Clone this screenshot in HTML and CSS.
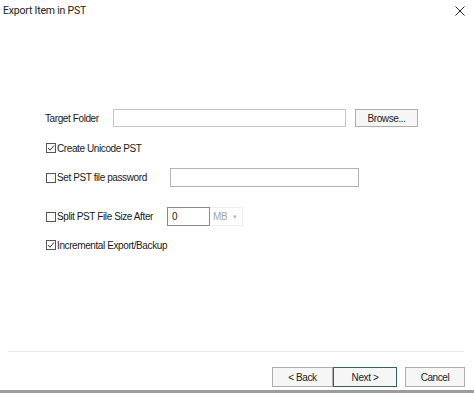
FILE: index.html
```html
<!DOCTYPE html>
<html>
<head>
<meta charset="utf-8">
<link rel="stylesheet" href="styles.css">
</head>
<body>
<div class="window">
  <header class="titlebar">
    <span class="title">Export Item in PST</span>
    <svg class="close" width="10" height="10" viewBox="0 0 10 10"><path d="M0.5 0.5 L9.5 9.5 M9.5 0.5 L0.5 9.5" stroke="#222" stroke-width="1" fill="none"/></svg>
  </header>
  <main class="content">
    <div class="row row-target">
      <span class="label label-target">Target Folder</span>
      <span class="input input-target"></span>
      <span class="btn btn-browse">Browse...</span>
    </div>
    <div class="row row-unicode">
      <span class="check checked"><svg width="8" height="8" viewBox="0 0 8 8"><path d="M1 4 L3 6.2 L7 1.5" stroke="#333" stroke-width="1" fill="none"/></svg></span>
      <span class="label">Create Unicode PST</span>
    </div>
    <div class="row row-password">
      <span class="check"></span>
      <span class="label label-password">Set PST file password</span>
      <span class="input input-password"></span>
    </div>
    <div class="row row-split">
      <span class="check"></span>
      <span class="label label-split">Split PST File Size After</span>
      <span class="input input-split">0</span>
      <span class="combo"><span class="combo-text">MB</span><span class="combo-arrow">&#9662;</span></span>
    </div>
    <div class="row row-incremental">
      <span class="check checked"><svg width="8" height="8" viewBox="0 0 8 8"><path d="M1 4 L3 6.2 L7 1.5" stroke="#333" stroke-width="1" fill="none"/></svg></span>
      <span class="label">Incremental Export/Backup</span>
    </div>
  </main>
  <footer class="footer">
    <div class="separator"></div>
    <div class="buttons">
      <span class="btn btn-back">&lt; Back</span>
      <span class="btn btn-next">Next &gt;</span>
      <span class="btn btn-cancel">Cancel</span>
    </div>
  </footer>
  <div class="strip"></div>
</div>
</body>
</html>
```

FILE: styles.css
```css
html, body {
  margin: 0;
  padding: 0;
  background: #ffffff;
}

.window {
  width: 474px;
  height: 393px;
  display: flex;
  flex-direction: column;
  background: #ffffff;
  font-family: "Liberation Sans", Arial, sans-serif;
  font-size: 10px;
  letter-spacing: -0.4px;
  color: #1a1a1a;
  overflow: hidden;
}

.titlebar {
  height: 21px;
  display: flex;
  align-items: center;
  justify-content: space-between;
  padding: 0 9px 0 3px;
  flex: none;
}

.title {
  font-family: Roboto, "Noto Sans", sans-serif;
  font-size: 10.5px;
  letter-spacing: -0.2px;
  color: #222;
}

.close {
  display: block;
}

.content {
  flex: 1;
  display: flex;
  flex-direction: column;
  padding-left: 45px;
}

.row {
  display: flex;
  align-items: center;
}

.row-target {
  margin-top: 88px;
  height: 18px;
}

.row-unicode {
  margin-top: 12px;
  height: 18px;
  padding-left: 1px;
}

.row-password {
  margin-top: 11px;
  height: 19px;
  padding-left: 1px;
}

.row-split {
  margin-top: 20px;
  height: 19px;
  padding-left: 1px;
}

.row-incremental {
  margin-top: 10px;
  height: 18px;
  padding-left: 1px;
}

.label-target {
  width: 68px;
}

.label-password {
  width: 113px;
}

.label-split {
  width: 110px;
}

.input {
  box-sizing: border-box;
  background: #fff;
  border: 1px solid #c6c6c6;
  display: flex;
  align-items: center;
}

.input-target {
  width: 233px;
  height: 18px;
}

.input-password {
  width: 189px;
  height: 19px;
  border-color: #b4b4b4;
}

.input-split {
  width: 43px;
  height: 19px;
  border-color: #8a8a8a;
  padding-left: 4px;
}

.combo {
  box-sizing: border-box;
  width: 33px;
  height: 19px;
  border: 1px solid #eeeeee;
  border-left: none;
  display: flex;
  align-items: center;
  justify-content: space-between;
  padding: 0 5px 0 3px;
  color: #a5a5a5;
}

.combo-arrow {
  font-size: 7px;
  color: #b5b5b5;
}

.check {
  box-sizing: border-box;
  width: 10px;
  height: 10px;
  border: 1px solid #555;
  background: #fff;
  margin-right: 1px;
  display: flex;
  align-items: center;
  justify-content: center;
}

.check svg {
  display: block;
}

.btn {
  box-sizing: border-box;
  display: flex;
  align-items: center;
  justify-content: center;
  height: 20px;
  background: #f6f6f6;
  border: 1px solid #adadad;
  color: #222;
}

.btn-browse {
  width: 63px;
  height: 18px;
  margin-left: 9px;
}

.footer {
  flex: none;
  display: flex;
  flex-direction: column;
}

.separator {
  height: 1px;
  background: #e8e8e8;
  margin: 0 10px 0 8px;
}

.buttons {
  display: flex;
  justify-content: flex-end;
  margin-top: 15px;
  padding-right: 9px;
}

.btn-back {
  width: 61px;
}

.btn-next {
  width: 64px;
  border-color: #35625e;
}

.btn-cancel {
  width: 60px;
  margin-left: 8px;
}

.strip {
  margin-top: 3px;
  height: 3px;
  background: #9c9c9c;
  flex: none;
}
```
